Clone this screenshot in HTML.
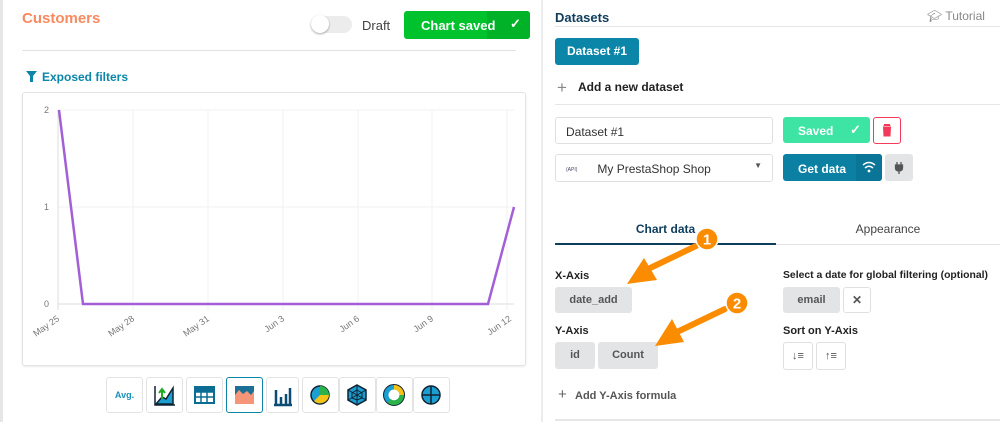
<!DOCTYPE html>
<html><head><style>
*{box-sizing:border-box;margin:0;padding:0}
body{width:1000px;height:422px;overflow:hidden;background:#fff;font-family:"Liberation Sans",sans-serif;position:relative;color:#333}
.a{position:absolute}
.b{font-weight:bold}
</style></head><body>
<div class="a" style="left:0;top:0;width:3px;height:422px;background:#e6e6e6"></div>
<div class="a" style="left:541px;top:0;width:2px;height:422px;background:#ececec"></div>
<div class="a b" style="left:22px;top:10px;font-size:15px;color:#f78a60">Customers</div>
<div class="a" style="left:311px;top:16px;width:41px;height:17px;border-radius:9px;background:#ececec"></div>
<div class="a" style="left:311px;top:15px;width:18px;height:18px;border-radius:50%;background:#fff;box-shadow:0 1px 2px rgba(0,0,0,.35)"></div>
<div class="a" style="left:362px;top:18px;font-size:13px;color:#444">Draft</div>
<div class="a" style="left:404px;top:11px;width:126px;height:28px;background:#00c22d;border-radius:3px"></div>
<div class="a" style="left:487px;top:11px;width:43px;height:28px;background:#00b228;border-radius:0 3px 3px 0"></div>
<div class="a b" style="left:421px;top:18px;font-size:13px;color:#fff">Chart saved</div>
<div class="a b" style="left:510px;top:16px;font-size:13px;color:#fff">✓</div>
<div class="a" style="left:22px;top:50px;width:494px;height:1px;background:#e2e2e2"></div>
<svg class="a" style="left:26px;top:71px" width="11" height="11" viewBox="0 0 11 11"><path d="M0 0H11L7 5V11H4V5Z" fill="#0b86a8"/></svg>
<div class="a b" style="left:42px;top:70px;font-size:12px;color:#0b86a8">Exposed filters</div>
<div class="a" style="left:22px;top:92px;width:504px;height:274px;border:1px solid #e3e3e3;border-radius:3px;box-shadow:0 1px 2px rgba(0,0,0,.08)"></div>
<svg class="a" style="left:22px;top:92px" width="504" height="274">
<g stroke="#f2f2f2" stroke-width="1">
<line x1="36" y1="18" x2="492" y2="18"/><line x1="36" y1="115" x2="492" y2="115"/>
<line x1="111" y1="18" x2="111" y2="218"/><line x1="186" y1="18" x2="186" y2="218"/><line x1="261" y1="18" x2="261" y2="218"/><line x1="336" y1="18" x2="336" y2="218"/><line x1="410" y1="18" x2="410" y2="218"/><line x1="485" y1="18" x2="485" y2="218"/>
</g>
<line x1="36" y1="212" x2="492" y2="212" stroke="#ddd"/>
<line x1="36" y1="18" x2="36" y2="218" stroke="#ddd"/>
<g font-size="9" fill="#777" font-family="Liberation Sans">
<text x="27" y="21" text-anchor="end">2</text><text x="27" y="118" text-anchor="end">1</text><text x="27" y="215" text-anchor="end">0</text>
<text transform="translate(38,228) rotate(-35)" text-anchor="end">May 25</text>
<text transform="translate(113,228) rotate(-35)" text-anchor="end">May 28</text>
<text transform="translate(188,228) rotate(-35)" text-anchor="end">May 31</text>
<text transform="translate(263,228) rotate(-35)" text-anchor="end">Jun 3</text>
<text transform="translate(338,228) rotate(-35)" text-anchor="end">Jun 6</text>
<text transform="translate(412,228) rotate(-35)" text-anchor="end">Jun 9</text>
<text transform="translate(490,228) rotate(-35)" text-anchor="end">Jun 12</text>
</g>
<polyline points="37,18 61,212 466,212 492,115" fill="none" stroke="#a35fd6" stroke-width="2.5"/>
</svg>
<div class="a" style="left:106px;top:377px;width:37px;height:36px;border:1px solid #e3e3e3;border-radius:3px;font-size:9px;color:#1a8fb8;font-weight:bold;text-align:center;line-height:34px">Avg.</div>
<div class="a" style="left:146px;top:377px;width:37px;height:36px;border:1px solid #e3e3e3;border-radius:3px"><svg width="35" height="34"><path d="M9 26L15 19L19 21L26 10V26Z" fill="#1a9fd0" stroke="#123" stroke-width="1.5"/><path d="M8 8V27H28" fill="none" stroke="#123" stroke-width="1.5"/><path d="M15 21V12M12 15L15 11L18 15" stroke="#2a2" stroke-width="2" fill="none"/></svg></div>
<div class="a" style="left:186px;top:377px;width:37px;height:36px;border:1px solid #e3e3e3;border-radius:3px"><svg width="35" height="34"><rect x="8" y="9" width="19" height="16" fill="#fff" stroke="#0b6c94" stroke-width="2"/><path d="M8 14H27M8 19H27M14 14V25M20 14V25" stroke="#0b6c94" stroke-width="1.5"/><rect x="8" y="9" width="19" height="5" fill="#0b6c94"/></svg></div>
<div class="a" style="left:226px;top:377px;width:37px;height:36px;border:1px solid #0b86a8;border-radius:3px"><svg width="35" height="34"><rect x="8" y="8" width="19" height="18" fill="#1c6f95"/><path d="M8 17L12 12L16 16L20 13L24 17L27 13V26H8Z" fill="#f79578"/></svg></div>
<div class="a" style="left:266px;top:377px;width:33px;height:36px;border:1px solid #e3e3e3;border-radius:3px"><svg width="31" height="34"><path d="M7 27H25M9 12V26M14 19V26M19 16V26M23 10V26" stroke="#0b4c74" stroke-width="2.5"/></svg></div>
<div class="a" style="left:302px;top:377px;width:37px;height:36px;border:1px solid #e3e3e3;border-radius:3px"><svg width="35" height="34"><circle cx="17" cy="17" r="9" fill="#1a9fd0" stroke="#123" stroke-width="1.5"/><path d="M17 17V8A9 9 0 0 1 26 17Z" fill="#2bb34a"/><path d="M17 17H26A9 9 0 0 1 11 23Z" fill="#f5c218"/></svg></div>
<div class="a" style="left:339px;top:377px;width:37px;height:36px;border:1px solid #e3e3e3;border-radius:3px"><svg width="35" height="34"><polygon points="17,7 26,12 26,22 17,27 8,22 8,12" fill="#1a9fd0" stroke="#123" stroke-width="1.5"/><path d="M17 7V27M8 12L26 22M26 12L8 22" stroke="#123"/><polygon points="17,12 22,15 22,20 17,22 12,20 12,15" fill="none" stroke="#123"/></svg></div>
<div class="a" style="left:376px;top:377px;width:37px;height:36px;border:1px solid #e3e3e3;border-radius:3px"><svg width="35" height="34"><circle cx="17" cy="17" r="8" fill="none" stroke="#1a9fd0" stroke-width="5"/><path d="M17 9A8 8 0 0 1 25 17" fill="none" stroke="#f5c218" stroke-width="5"/><path d="M25 17A8 8 0 0 1 12 23" fill="none" stroke="#2bb34a" stroke-width="5"/><circle cx="17" cy="17" r="10.5" fill="none" stroke="#123"/></svg></div>
<div class="a" style="left:413px;top:377px;width:37px;height:36px;border:1px solid #e3e3e3;border-radius:3px"><svg width="35" height="34"><circle cx="17" cy="17" r="9" fill="#1a9fd0" stroke="#123" stroke-width="1.5"/><path d="M8 17H26M17 8V26" stroke="#123" stroke-width="1.5"/></svg></div>
<div class="a b" style="left:555px;top:10px;font-size:13px;color:#0f3d5c">Datasets</div>
<div class="a" style="left:927px;top:9px;font-size:12px;color:#888">🎓︎ Tutorial</div>
<div class="a" style="left:555px;top:26px;width:445px;height:1px;background:#e6e6e6"></div>
<div class="a b" style="left:555px;top:38px;width:84px;height:27px;background:#0b86a8;border-radius:3px;color:#fff;font-size:12px;text-align:center;line-height:27px">Dataset #1</div>
<div class="a" style="left:557px;top:78px;font-size:17px;color:#888">+</div>
<div class="a b" style="left:578px;top:80px;font-size:12px;color:#222">Add a new dataset</div>
<div class="a" style="left:555px;top:104px;width:445px;height:1px;background:#e6e6e6"></div>
<div class="a" style="left:555px;top:117px;width:218px;height:27px;border:1px solid #e0e0e0;border-radius:3px;font-size:12px;color:#333;padding:7px 10px">Dataset #1</div>
<div class="a" style="left:783px;top:117px;width:87px;height:26px;background:#3ee4a4;border-radius:3px"></div>
<div class="a b" style="left:798px;top:124px;font-size:12px;color:#fff">Saved</div>
<div class="a b" style="left:850px;top:122px;font-size:13px;color:#fff">✓</div>
<div class="a" style="left:873px;top:117px;width:28px;height:27px;border:1.5px solid #f23b5b;border-radius:3px"><svg width="25" height="24"><path d="M9 8H17M10.5 8V6.5H15.5V8M9.5 9.5H16.5L16 18H10Z" fill="#f23b5b" stroke="#f23b5b"/></svg></div>
<div class="a" style="left:555px;top:154px;width:218px;height:28px;border:1px solid #e0e0e0;border-radius:3px;font-size:12px;color:#333;padding:7px 10px"><span style="font-size:5px;color:#446;vertical-align:2px">(API)</span>&nbsp;&nbsp;&nbsp;&nbsp;&nbsp; My PrestaShop Shop<span style="position:absolute;right:10px;top:6px;font-size:8px;color:#555">▼</span></div>
<div class="a" style="left:783px;top:154px;width:99px;height:27px;background:#0b80a3;border-radius:3px"></div>
<div class="a" style="left:856px;top:154px;width:26px;height:27px;background:#0a7597;border-radius:0 3px 3px 0"></div>
<div class="a b" style="left:798px;top:162px;font-size:12px;color:#fff">Get data</div>
<svg class="a" style="left:861px;top:160px" width="16" height="14"><path d="M2 5Q8 0 14 5M4 8Q8 4.5 12 8" stroke="#fff" stroke-width="1.5" fill="none"/><circle cx="8" cy="11" r="1.4" fill="#fff"/></svg>
<div class="a" style="left:885px;top:154px;width:28px;height:27px;background:#e3e4e6;border-radius:3px"><svg width="28" height="27"><path d="M12 8V11M16 8V11M10.5 11H17.5V14Q17.5 17 14 17Q10.5 17 10.5 14Z M14 17V20" fill="#555" stroke="#555" stroke-width="1.3"/></svg></div>
<div class="a b" style="left:555px;top:222px;width:221px;text-align:center;font-size:12px;color:#0f3d5c">Chart data</div>
<div class="a" style="left:776px;top:222px;width:224px;text-align:center;font-size:12px;color:#444">Appearance</div>
<div class="a" style="left:555px;top:244px;width:445px;height:1px;background:#e3e3e3"></div>
<div class="a" style="left:555px;top:243px;width:221px;height:2px;background:#0f3d5c"></div>
<div class="a b" style="left:555px;top:270px;font-size:11px;color:#222">X-Axis</div>
<div class="a b" style="left:555px;top:287px;width:77px;height:26px;background:#e3e4e6;border-radius:3px;text-align:center;line-height:26px;font-size:11px;color:#555">date_add</div>
<div class="a b" style="left:555px;top:325px;font-size:11px;color:#222">Y-Axis</div>
<div class="a b" style="left:555px;top:342px;width:40px;height:27px;background:#e3e4e6;border-radius:3px;text-align:center;line-height:27px;font-size:11px;color:#555">id</div>
<div class="a b" style="left:598px;top:342px;width:60px;height:27px;background:#e3e4e6;border-radius:3px;text-align:center;line-height:27px;font-size:11px;color:#555">Count</div>
<div class="a b" style="left:783px;top:270px;font-size:10.4px;color:#222">Select a date for global filtering (optional)</div>
<div class="a b" style="left:783px;top:287px;width:57px;height:26px;background:#e3e4e6;border-radius:3px;text-align:center;line-height:26px;font-size:11px;color:#555">email</div>
<div class="a b" style="left:843px;top:287px;width:28px;height:26px;border:1px solid #e0e0e0;border-radius:3px;text-align:center;line-height:24px;font-size:12px;color:#555">✕</div>
<div class="a b" style="left:783px;top:325px;font-size:11px;color:#222">Sort on Y-Axis</div>
<div class="a" style="left:783px;top:342px;width:30px;height:28px;border:1px solid #e0e0e0;border-radius:3px;text-align:center;line-height:26px;font-size:11px;color:#555">↓≡</div>
<div class="a" style="left:816px;top:342px;width:30px;height:28px;border:1px solid #e0e0e0;border-radius:3px;text-align:center;line-height:26px;font-size:11px;color:#555">↑≡</div>
<div class="a" style="left:558px;top:386px;font-size:15px;color:#666">+</div>
<div class="a b" style="left:575px;top:390px;font-size:11px;color:#555">Add Y-Axis formula</div>
<div class="a" style="left:555px;top:419px;width:445px;height:2px;background:#e6e6e6"></div>
<svg class="a" style="left:600px;top:220px" width="160" height="150">
<path d="M96 26L46 50" stroke="#fb8c00" stroke-width="6" stroke-linecap="round"/>
<polygon points="27,64 44,38 57,60" fill="#fb8c00"/>
<circle cx="107" cy="19" r="11" fill="#fb8c00" stroke="#fff" stroke-width="1.5"/>
<text x="107" y="24.5" text-anchor="middle" fill="#fff" font-size="15" font-weight="bold" font-family="Liberation Sans">1</text>
<path d="M125 89L77 112" stroke="#fb8c00" stroke-width="6" stroke-linecap="round"/>
<polygon points="55,126 72,99 84,122" fill="#fb8c00"/>
<circle cx="137" cy="83" r="11" fill="#fb8c00" stroke="#fff" stroke-width="1.5"/>
<text x="137" y="88.5" text-anchor="middle" fill="#fff" font-size="15" font-weight="bold" font-family="Liberation Sans">2</text>
</svg>
</body></html>
